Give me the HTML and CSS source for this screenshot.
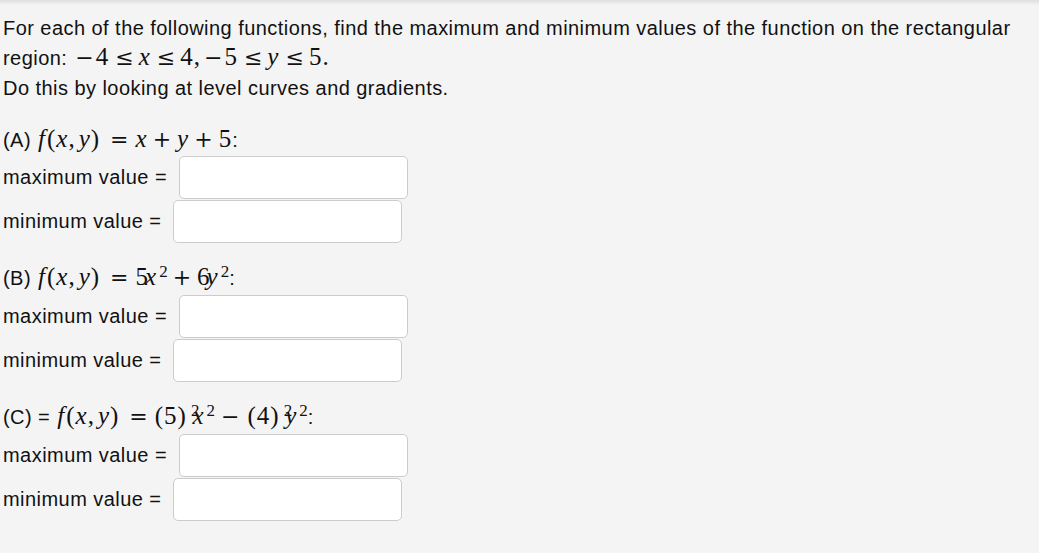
FILE: index.html
```html
<!DOCTYPE html>
<html lang="en">
<head>
<meta charset="utf-8">
<title>Level curves and gradients</title>
<link rel="stylesheet" href="styles.css">
</head>
<body>
<main class="page">
  <p class="intro">For each of the following functions, find the maximum and minimum values of the function on the rectangular region: <span class="math"><span class="op unary">&minus;</span><span class="mn">4</span><span class="op rel">&le;</span><span class="mi">x</span><span class="op rel">&le;</span><span class="mn">4</span><span class="mp comma">,</span><span class="op unary">&minus;</span><span class="mn">5</span><span class="op rel">&le;</span><span class="mi">y</span><span class="op rel">&le;</span><span class="mn">5</span><span class="mp">.</span></span><br>Do this by looking at level curves and gradients.</p>

  <section class="part">
    <div class="fn">(A) <span class="math"><span class="mi f">f</span><span class="mp">(</span><span class="mi">x</span><span class="mp comma">,</span><span class="mi">y</span><span class="mp">)</span><span class="op rel">=</span><span class="mi">x</span><span class="op bin">+</span><span class="mi">y</span><span class="op bin">+</span><span class="mn">5</span></span>:</div>
    <div class="row">maximum value = <input class="answer" type="text"></div>
    <div class="row">minimum value = <input class="answer" type="text"></div>
  </section>

  <section class="part">
    <div class="fn sups">(B) <span class="math"><span class="mi f">f</span><span class="mp">(</span><span class="mi">x</span><span class="mp comma">,</span><span class="mi">y</span><span class="mp">)</span><span class="op rel">=</span><span class="mn">5</span><span class="mi overlap">x</span><sup class="sup gap">2</sup><span class="op bin">+</span><span class="mn">6</span><span class="mi overlap">y</span><sup class="sup gap">2</sup></span>:</div>
    <div class="row">maximum value = <input class="answer" type="text"></div>
    <div class="row">minimum value = <input class="answer" type="text"></div>
  </section>

  <section class="part">
    <div class="fn sups">(C) = <span class="math"><span class="mi f">f</span><span class="mp">(</span><span class="mi">x</span><span class="mp comma">,</span><span class="mi">y</span><span class="mp">)</span><span class="op rel">=</span><span class="mp">(</span><span class="mn">5</span><span class="mp">)</span><sup class="sup wide-gap">2</sup><span class="mi under-sup">x</span><sup class="sup gap">2</sup><span class="op bin wide">&minus;</span><span class="mp">(</span><span class="mn">4</span><span class="mp">)</span><sup class="sup wide-gap">2</sup><span class="mi under-sup">y</span><sup class="sup gap">2</sup></span>:</div>
    <div class="row">maximum value = <input class="answer" type="text"></div>
    <div class="row">minimum value = <input class="answer" type="text"></div>
  </section>
</main>
</body>
</html>
```

FILE: styles.css
```css
html {
  background: #f4f4f4 linear-gradient(#dedede, #f4f4f4) no-repeat;
  background-size: 100% 5px;
}

body {
  margin: 0;
  font-family: "Liberation Sans", Arial, sans-serif;
  font-size: 20px;
  letter-spacing: 0.45px;
  color: #111;
}

.page {
  padding: 13px 0 0 3px;
}

.intro {
  margin: 0;
  line-height: 30px;
  padding-right: 10px;
}

.intro .math {
  margin-left: 2px;
}

.part {
  margin-top: 22px;
}

.part + .part {
  margin-top: 20px;
}

.fn {
  line-height: 30px;
  height: 30px;
}

.fn.sups {
  height: 31px;
}

.math {
  font-family: "Liberation Serif", "Times New Roman", serif;
  font-size: 25px;
  line-height: 20px;
  letter-spacing: 1px;
  white-space: nowrap;
}

.mi {
  font-style: italic;
}

.mi.f {
  margin-left: 1px;
  margin-right: 1px;
}

.mn, .mp {
  font-style: normal;
}

.op {
  font-family: "DejaVu Serif", serif;
  font-size: 22px;
  letter-spacing: 0;
}

.comma {
  margin-right: 3px;
}

.rel {
  margin: 0 7px 0 10px;
}

.intro .rel {
  margin: 0 5px 0 6px;
}

.bin {
  margin: 0 6px 0 5px;
}

.bin.wide {
  margin: 0 8px 0 6px;
}

.unary {
  margin-right: 2px;
}

.overlap {
  margin-left: -4px;
}

.under-sup {
  margin-left: -7px;
}

.sup {
  font-size: 0.68em;
  line-height: 0;
  vertical-align: 0.5em;
  letter-spacing: 0;
}

.sup.gap {
  margin-left: 2px;
}

.sup.wide-gap {
  margin-left: 4px;
}

.row {
  height: 43px;
  margin-top: 1px;
  display: flex;
  align-items: center;
}

.answer {
  box-sizing: border-box;
  width: 229px;
  height: 43px;
  margin: 0 0 0 12px;
  border: 1px solid #cccccc;
  border-radius: 5px;
  background: #fff;
  font: inherit;
  padding: 0 8px;
}
```
